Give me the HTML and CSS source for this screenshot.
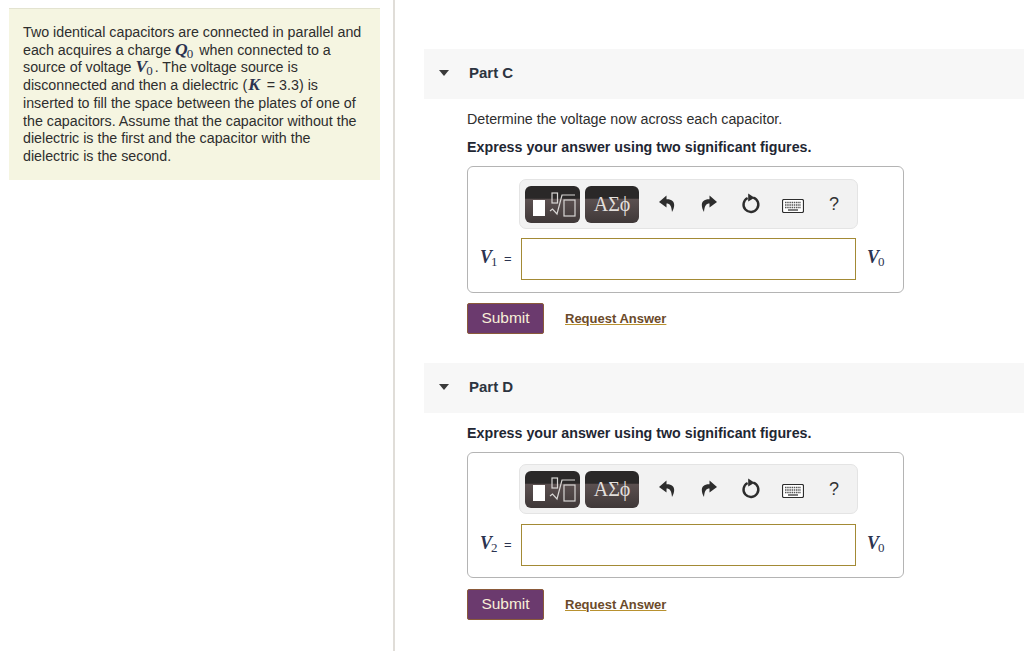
FILE: index.html
```html
<!DOCTYPE html>
<html>

<head>
  <title>Parts C and D</title>
  <meta charset="UTF-8">
  <link rel="stylesheet" href="styles.css">
</head>

<body>
  <svg class="defs" width="0" height="0">
    <symbol id="undo" viewBox="0 0 16 18">
      <path d="M7.5 0.5 L0 7 L7.5 12.500 L7.5 8.600 C11 8.600 12.400 11 13 17 C16.500 11 16.500 4 7.5 4.200 Z" />
    </symbol>
    <symbol id="reset" viewBox="0 0 20 22">
      <path class="ring" d="M12.3 4.6 A7.4 7.4 0 1 1 6.6 5" />
      <path d="M7.2 0.5 L13.6 4.7 L7.2 8.4 Z" />
    </symbol>
    <symbol id="keyboard" viewBox="0 0 22 14">
      <rect class="keyBody" x="0.5" y="0.5" width="21" height="13" rx="1.5" />
      <path class="keyRows" d="M3 3.5h16M3 6h16M3 8.500h16" />
      <path class="keySpace" d="M6 11h10" />
    </symbol>
    <symbol id="template" viewBox="0 0 55 37">
      <rect class="whiteBox" x="8" y="14" width="12" height="16" />
      <rect x="27" y="7" width="5.500" height="10" />
      <path d="M25 25 L27.500 23 L32 28 L37 9 L50 9" />
      <rect x="39" y="14" width="11" height="16" />
    </symbol>
  </svg>

  <div class="page">
    <div class="leftCol">
      <div class="intro">
        Two identical capacitors are connected in parallel and each acquires a charge <span class="math">Q<sub>0</sub></span> when connected to a source of voltage <span class="math">V<sub>0</sub></span>. The voltage source is disconnected and then a dielectric (<span class="math mathK">K</span> = 3.3) is inserted to fill the space between the plates of one of the capacitors. Assume that the capacitor without the dielectric is the first and the capacitor with the dielectric is the second.
      </div>
    </div>

    <div class="rightCol">
      <div class="part partC">
        <div class="partHead"><span class="arrow"></span>Part C</div>
        <p class="question">Determine the voltage now across each capacitor.</p>
        <p class="express">Express your answer using two significant figures.</p>
        <div class="answerBox">
          <div class="toolbar">
            <div class="tplBtn"><svg class="rootIcon"><use href="#template" /></svg></div>
            <div class="tplBtn greek">ΑΣϕ</div>
            <div class="tools">
              <svg class="tool"><use href="#undo" /></svg>
              <svg class="tool flip"><use href="#undo" /></svg>
              <svg class="tool resetTool"><use href="#reset" /></svg>
              <svg class="tool keyTool"><use href="#keyboard" /></svg>
              <span class="help">?</span>
            </div>
          </div>
          <div class="answerRow">
            <span class="varName math">V<sub>1</sub> <span class="eq">=</span></span>
            <div class="answerInput"></div>
            <span class="unit math">V<sub>0</sub></span>
          </div>
        </div>
        <div class="actions">
          <button class="submitBtn">Submit</button>
          <a class="reqLink">Request Answer</a>
        </div>
      </div>

      <div class="part partD">
        <div class="partHead"><span class="arrow"></span>Part D</div>
        <p class="express expressD">Express your answer using two significant figures.</p>
        <div class="answerBox">
          <div class="toolbar">
            <div class="tplBtn"><svg class="rootIcon"><use href="#template" /></svg></div>
            <div class="tplBtn greek">ΑΣϕ</div>
            <div class="tools">
              <svg class="tool"><use href="#undo" /></svg>
              <svg class="tool flip"><use href="#undo" /></svg>
              <svg class="tool resetTool"><use href="#reset" /></svg>
              <svg class="tool keyTool"><use href="#keyboard" /></svg>
              <span class="help">?</span>
            </div>
          </div>
          <div class="answerRow">
            <span class="varName math">V<sub>2</sub> <span class="eq">=</span></span>
            <div class="answerInput"></div>
            <span class="unit math">V<sub>0</sub></span>
          </div>
        </div>
        <div class="actions">
          <button class="submitBtn">Submit</button>
          <a class="reqLink">Request Answer</a>
        </div>
      </div>
    </div>
  </div>
</body>

</html>
```

FILE: styles.css
```css
* {
  box-sizing: border-box;
}
html, body {
  margin: 0;
  height: 100%;
  background-color: #ffffff;
}
body {
  overflow: hidden;
  font-family: "Liberation Sans", Arial, sans-serif;
  font-size: 14.25px;
  color: #2e2e2e;
}
.defs {
  position: absolute;
}
.page {
  display: grid;
  grid-template-columns: 395px 1fr;
  height: 651px;
}
.leftCol {
  border-right: 2px solid #e0ddd8;
  padding: 8px 13px 0 9px;
}
.intro {
  background-color: #f5f5e1;
  border-top: 1px solid #e3e3d0;
  padding: 15px 17px 15px 14px;
  height: 172px;
  line-height: 17.7px;
}
.math {
  font-family: "Liberation Serif", serif;
  font-style: italic;
  font-weight: bold;
  font-size: 17.5px;
  color: #2b3350;
}
.intro .math {
  line-height: 0;
  margin-right: 2px;
}
.intro .mathK {
  margin: 0 3px 0 1px;
}
.math sub {
  margin-left: -1px;
  font-style: normal;
  font-weight: normal;
  font-size: 13px;
  line-height: 0;
  vertical-align: -3px;
}
.rightCol {
  padding: 49px 0 0 29px;
}
.partHead {
  display: flex;
  align-items: center;
  height: 50px;
  padding-left: 15px;
  padding-bottom: 3px;
  background-color: #f7f7f7;
  font-size: 15px;
  font-weight: bold;
  color: #2c3440;
}
.arrow {
  width: 0;
  height: 0;
  margin-right: 20px;
  border-left: 5.500px solid transparent;
  border-right: 5.500px solid transparent;
  border-top: 6px solid #3a3a3a;
}
.question {
  margin: 12px 0 0 43px;
  line-height: 17px;
}
.express {
  margin: 11px 0 0 43px;
  line-height: 17px;
  font-weight: bold;
  color: #1f2733;
}
.expressD {
  margin-top: 12px;
}
.answerBox {
  width: 437px;
  height: 127px;
  margin: 10px 0 0 43px;
  padding: 12px 0 0 0;
  border: 1px solid #b4b4b4;
  border-radius: 6px;
}
.partD .answerBox {
  height: 126px;
  padding-top: 11px;
}
.toolbar {
  display: flex;
  align-items: center;
  width: 339px;
  height: 50px;
  margin-left: 51px;
  padding-left: 5px;
  background-color: #f2f2f2;
  border: 1px solid #e4e4e4;
  border-radius: 7px;
}
.tplBtn {
  display: flex;
  align-items: center;
  justify-content: center;
  width: 55px;
  height: 37px;
  margin-right: 5px;
  border-radius: 6px;
  background: linear-gradient(#2a2828 0, #2a2828 33%, #5b5050 36%, #3f3838 100%);
}
.rootIcon {
  width: 55px;
  height: 37px;
  fill: none;
  stroke: #d8d6d4;
  stroke-width: 1.200;
}
.whiteBox {
  fill: #ffffff;
  stroke: none;
}
.greek {
  width: 54px;
  font-family: "Liberation Serif", serif;
  font-size: 20px;
  color: #e2dfdc;
}
.tools {
  display: flex;
  align-items: center;
  margin-left: 15px;
}
.tool {
  width: 16px;
  height: 18px;
  margin-right: 26px;
  fill: #2d2d2d;
}
.flip {
  transform: scaleX(-1);
  margin-right: 24px;
}
.resetTool {
  width: 20px;
  height: 22px;
  margin-right: 21px;
}
.ring {
  fill: none;
  stroke: #2d2d2d;
  stroke-width: 2.400;
}
.keyTool {
  width: 22px;
  height: 14px;
  margin-top: 3px;
  margin-right: 25px;
}
.keyBody {
  fill: #ffffff;
  stroke: #2d2d2d;
  stroke-width: 1.200;
}
.keyRows {
  fill: none;
  stroke: #555555;
  stroke-width: 1.500;
  stroke-dasharray: 1.500 0.700;
}
.keySpace {
  fill: none;
  stroke: #555555;
  stroke-width: 1.500;
}
.help {
  font-size: 18px;
  color: #333333;
}
.answerRow {
  display: flex;
  align-items: center;
  margin-top: 9px;
}
.partD .answerRow {
  margin-top: 10px;
}
.varName {
  width: 53px;
  margin-bottom: 4px;
  padding-left: 12px;
  font-size: 18px;
  white-space: nowrap;
}
.eq {
  font-family: "Liberation Sans", sans-serif;
  font-style: normal;
  font-weight: normal;
  font-size: 13px;
  margin-left: 2px;
}
.answerInput {
  width: 335px;
  height: 42px;
  background-color: #ffffff;
  border: 1px solid #a38a35;
}
.unit {
  margin-bottom: 4px;
  margin-left: 11px;
  font-size: 18px;
}
.actions {
  display: flex;
  align-items: center;
  margin: 10px 0 0 43px;
}
.partD .actions {
  margin-top: 11px;
}
.submitBtn {
  width: 77px;
  height: 31px;
  padding: 0 0 1px 0;
  background-color: #6b3a6e;
  border: 1px solid #8a5a3a;
  border-radius: 2px;
  font-family: "Liberation Sans", sans-serif;
  font-size: 15.5px;
  color: #f7efd8;
}
.reqLink {
  margin-left: 21px;
  font-size: 13px;
  font-weight: bold;
  color: #6b4a2a;
  text-decoration: underline;
  text-decoration-color: #b8912f;
}
.partD {
  margin-top: 29px;
}
```
